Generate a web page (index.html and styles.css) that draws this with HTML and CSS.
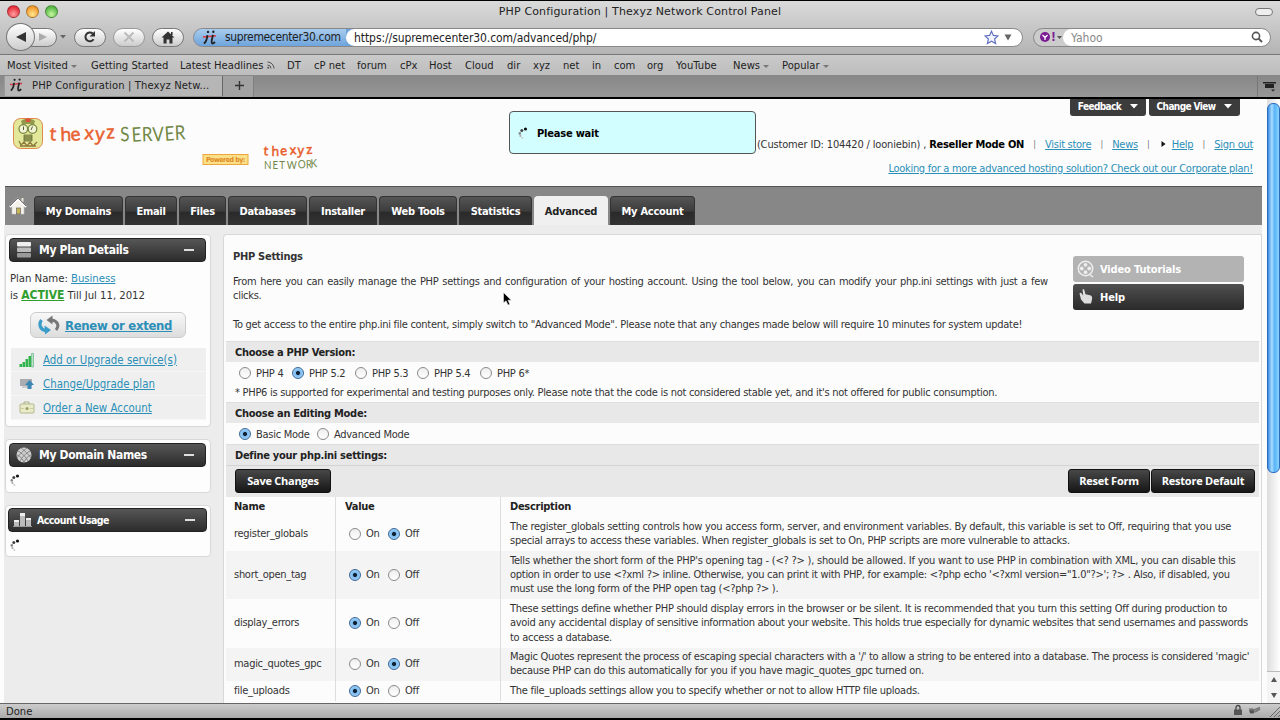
FILE: index.html
```html
<!DOCTYPE html>
<html lang="en">
<head>
    <meta charset="UTF-8">
    <meta name="viewport" content="width=device-width, initial-scale=1.0">
    <title>PHP Configuration | Thexyz Network Control Panel</title>
    <link rel="stylesheet" href="styles.css">
</head>
<body>
<svg width="0" height="0" class="defs">
    <symbol id="spinner" viewBox="0 0 12 14">
        <circle cx="8.5" cy="3" r="1.6" fill="#111"/>
        <circle cx="4.8" cy="4.4" r="1.5" fill="#444"/>
        <circle cx="2.8" cy="7.4" r="1.3" fill="#888"/>
        <circle cx="3.4" cy="10" r="1.1" fill="#aaa"/>
        <circle cx="5.4" cy="12" r="1" fill="#ccc"/>
    </symbol>
    <symbol id="ittt" viewBox="0 0 14 14">
        <path d="M1 6.2C4 7.4 8 5 13 5.6" fill="none" stroke="#d8404a" stroke-width="1.6"/>
        <path d="M5 4.8C4.8 8 4 11 1.8 12.6M10.2 4.6C9.6 8 8.2 11.4 9.4 12.4C10.2 13 11.4 12 12 11" fill="none" stroke="#222" stroke-width="1.7"/>
        <circle cx="5.6" cy="1.8" r="1.1" fill="#222"/>
        <circle cx="10.6" cy="1.6" r="1.1" fill="#222"/>
    </symbol>
</svg>

<div class="window">
    <div class="titlebar">
        <div class="lights"><i class="red"></i><i class="yellow"></i><i class="green"></i></div>
        <div class="title">PHP Configuration | Thexyz Network Control Panel</div>
        <i class="pill"></i>
    </div>

    <div class="toolbar">
        <div class="history">
            <span class="fwd"><svg width="10" height="10" viewBox="0 0 10 10"><path d="M1 1L9 5L1 9Z" fill="#aaa"/></svg></span>
            <span class="back"><svg width="12" height="12" viewBox="0 0 12 12"><path d="M11 1V11L1 6Z" fill="#333"/></svg></span>
        </div>
        <svg class="caret" width="6" height="4" viewBox="0 0 6 4"><path d="M0 0H6L3 3.5Z" fill="#666"/></svg>
        <span class="btn reload"><svg width="14" height="14" viewBox="0 0 14 14"><path d="M10.6 9.2A4.4 4.4 0 1 1 9.8 3.6" fill="none" stroke="#333" stroke-width="2"/><path d="M12 1V6.6H6.6Z" fill="#333"/></svg></span>
        <span class="btn stop"><svg width="12" height="12" viewBox="0 0 12 12"><path d="M1.5 1.5L10.5 10.5M10.5 1.5L1.5 10.5" stroke="#bbb" stroke-width="2"/></svg></span>
        <span class="btn home"><svg width="14" height="13" viewBox="0 0 14 13"><path d="M7 0.5L13.5 6.5H11.5V12.5H8.4V8.5H5.6V12.5H2.5V6.5H0.5ZM10 1H11.6V4H10Z" fill="#333"/></svg></span>
        <div class="address">
            <div class="site"><svg width="15" height="15"><use href="#ittt"/></svg><span>supremecenter30.com</span></div>
            <div class="url">https://supremecenter30.com/advanced/php/</div>
            <svg class="star" width="15" height="15" viewBox="0 0 15 15"><path d="M7.5 1.2L9.4 5.4L14 5.9L10.6 9L11.6 13.6L7.5 11.3L3.4 13.6L4.4 9L1 5.9L5.6 5.4Z" fill="#f4f6ff" stroke="#6474c0" stroke-width="1.2"/></svg>
            <svg class="drop" width="8" height="7" viewBox="0 0 8 7"><path d="M0.5 0.5H7.5L4 6.5Z" fill="#666"/></svg>
        </div>
        <div class="search">
            <div class="engine"><svg width="10" height="10" viewBox="0 0 10 10"><circle cx="5" cy="5" r="5" fill="#7b1b94"/><path d="M2.5 3L5 5.5L7.5 3M5 5.5V8" stroke="#fff" stroke-width="1.3" fill="none"/></svg><b>!</b><svg width="5" height="3" viewBox="0 0 5 3"><path d="M0 0H5L2.5 3Z" fill="#555"/></svg></div>
            <div class="query">Yahoo</div>
            <svg class="lens" width="12" height="12" viewBox="0 0 12 12"><circle cx="5" cy="5" r="3.6" fill="none" stroke="#555" stroke-width="1.6"/><path d="M7.6 7.6L11 11" stroke="#555" stroke-width="2"/></svg>
        </div>
    </div>

    <div class="bookmarks">
        <span>Most Visited <svg width="6" height="4" viewBox="0 0 6 4"><path d="M0 0H6L3 3Z" fill="#777"/></svg></span>
        <span>Getting Started</span>
        <span>Latest Headlines <svg width="8" height="8" viewBox="0 0 8 8"><path d="M0.5 1A6.5 6.5 0 0 1 7 7.5M0.5 4A3.5 3.5 0 0 1 4 7.5" fill="none" stroke="#555"/><circle cx="1.2" cy="6.8" r="1" fill="#555"/></svg></span>
        <span>DT</span>
        <span>cP net</span>
        <span>forum</span>
        <span>cPx</span>
        <span>Host</span>
        <span>Cloud</span>
        <span>dir</span>
        <span>xyz</span>
        <span>net</span>
        <span>in</span>
        <span>com</span>
        <span>org</span>
        <span>YouTube</span>
        <span>News <svg width="6" height="4" viewBox="0 0 6 4"><path d="M0 0H6L3 3Z" fill="#777"/></svg></span>
        <span>Popular <svg width="6" height="4" viewBox="0 0 6 4"><path d="M0 0H6L3 3Z" fill="#777"/></svg></span>
    </div>

    <div class="tabstrip">
        <div class="tab"><svg width="14" height="14"><use href="#ittt"/></svg><span>PHP Configuration | Thexyz Netw...</span></div>
        <div class="newtab"><svg width="9" height="9" viewBox="0 0 9 9"><path d="M4.5 0V9M0 4.5H9" stroke="#333" stroke-width="1.4"/></svg></div>
        <div class="alltabs"><svg width="13" height="11" viewBox="0 0 13 11"><path d="M0 1H13V2.5H0ZM2 3H11V7H2Z" fill="#222"/><path d="M8 8.5H12L10 10.5Z" fill="#222"/></svg></div>
    </div>

    <div class="viewport">
        <div class="page">
            <div class="header">
                <div class="logos">
                    <svg width="340" height="80" viewBox="0 0 340 80">
                        <rect x="13.5" y="19.5" width="29" height="30" rx="7" fill="#e3e79a" stroke="#e08a4c"/>
                        <path d="M21 22C25 19 31 19 35 22L34 25H22Z" fill="#8f9a4c"/>
                        <path d="M25 20.5L28 19L31 20.5L30 23H26Z" fill="#d9543a"/>
                        <circle cx="23.3" cy="30" r="4.3" fill="#f2f3d4" stroke="#77873f" stroke-width="1.2"/>
                        <circle cx="32.5" cy="30" r="4.3" fill="#f2f3d4" stroke="#77873f" stroke-width="1.2"/>
                        <path d="M23.5 27.5V31M32.5 27.5L31 31" stroke="#55602e"/>
                        <path d="M24 36H32V42H24ZM24 38H32M24 40H32" fill="#a8ad62" stroke="#5f6b34" stroke-width="0.8"/>
                        <path d="M19 42L21 46L24 43L27 47L30 43L33 47L37 43M20 47H36" fill="none" stroke="#8d7a3c" stroke-width="1.3"/>
                        <text class="hand orange big" x="49.5 60.5 71 84 95 106.5" y="41 42 42 40 41 39.5" rotate="3 -2 -6 4 4 -3">thexyz</text>
                        <text class="hand green big" transform="scale(0.85 1)" x="141.8 155.3 167 179.4 194 205.9" y="42.5 43 42.5 42.5 42 41" rotate="-3 -4 -2 -2 -4 -3">SERVER</text>
                        <text class="hand orange small" x="263.5 271.5 280.5 290 297.5 306.5" y="56 56.500 56.500 55.500 55.500 55" rotate="3 0 -6 -4 2 -3">thexyz</text>
                        <text class="hand green small2" transform="scale(0.85 1)" x="310.6 320.500 328.500 337.500 350.500 360 365.500" y="70 70 70 70 69.5 69.5 68.500" rotate="0 0 0 0 -3 -2 -3">NETWORK</text>
                        <rect x="203" y="55.5" width="45" height="10" fill="#fbe08a" stroke="#eda63c"/>
                        <text x="206" y="63" class="powered" textLength="39">Powered by:</text>
                    </svg>
                </div>
                <div class="account">
                    <div class="viewtabs">
                        <span class="vt">Feedback<svg width="8" height="5" viewBox="0 0 8 5"><path d="M0 0H8L4 4.5Z" fill="#fff"/></svg></span>
                        <span class="vt wide">Change View<svg width="8" height="5" viewBox="0 0 8 5"><path d="M0 0H8L4 4.5Z" fill="#fff"/></svg></span>
                    </div>
                    <div class="userline">
                        <span class="customer">(Customer ID: 104420 / looniebin) , <b>Reseller Mode ON</b></span>
                        <i>|</i><a>Visit store</a><i>|</i><a>News</a><i>|</i><svg width="5" height="8" viewBox="0 0 5 8"><path d="M0.5 1L4.5 4L0.5 7Z" fill="#111"/></svg><a>Help</a><i>|</i><a>Sign out</a>
                    </div>
                    <div class="upsell"><a>Looking for a more advanced hosting solution? Check out our Corporate plan!</a></div>
                </div>
            </div>

            <div class="nav">
                <span class="navhome"><svg width="18" height="20" viewBox="0 0 18 20"><path d="M12.5 2H14.5V6L12.5 5Z" fill="#e9e4d8"/><path d="M3 9L9 3L15 9V18H3Z" fill="#f3f1ea" stroke="#ccc" stroke-width="0.6"/><path d="M1 11L9 3L17 11" fill="none" stroke="#fff" stroke-width="2"/><path d="M1 10L9 2L17 10" fill="none" stroke="#555" stroke-width="0.8"/><rect x="7.5" y="12" width="4" height="6" fill="#c8b45a" stroke="#555" stroke-width="0.6"/></svg></span>
                <span class="navtab">My Domains</span>
                <span class="navtab">Email</span>
                <span class="navtab">Files</span>
                <span class="navtab">Databases</span>
                <span class="navtab">Installer</span>
                <span class="navtab">Web Tools</span>
                <span class="navtab">Statistics</span>
                <span class="navtab active">Advanced</span>
                <span class="navtab">My Account</span>
            </div>

            <div class="columns">
                <div class="sidebar">
                    <div class="box plan">
                        <div class="boxhead"><svg width="16" height="16" viewBox="0 0 16 16"><rect x="1" y="0" width="14" height="4.5" rx="1" fill="#eee"/><rect x="1" y="5.5" width="14" height="4.5" rx="1" fill="#bbb"/><rect x="1" y="11" width="14" height="4.5" rx="1" fill="#999"/></svg><span>My Plan Details</span><i></i></div>
                        <div class="planinfo">
                            <div>Plan Name: <a>Business</a></div>
                            <div>is <b>ACTIVE</b> Till Jul 11, 2012</div>
                        </div>
                        <div class="renew"><svg width="22" height="20" viewBox="0 0 22 20"><path d="M3.5 5C0.5 9 2 14.5 7.5 15.5" fill="none" stroke="#3a9cc8" stroke-width="3.2"/><path d="M6.5 10.5L13 15L7 19.5Z" fill="#3a9cc8"/><path d="M18 15C21.5 11 20 6 13.5 5" fill="none" stroke="#777" stroke-width="3"/><path d="M14.5 0.5V9.5L8.5 5Z" fill="#777"/></svg><a>Renew or extend</a></div>
                        <div class="links">
                            <div><svg width="16" height="16" viewBox="0 0 16 16"><path d="M0.5 12H3V15H0.5ZM3.5 10H6V15H3.5ZM6.5 7H9V15H6.5ZM9.5 4H12V15H9.5Z" fill="#2fb34a"/><path d="M12.5 1.5H14.5V15H12.5Z" fill="#b9e6bd" stroke="#5a8" stroke-width="0.6"/></svg><a>Add or Upgrade service(s)</a></div>
                            <div><svg width="16" height="16" viewBox="0 0 16 16"><rect x="1" y="3" width="12" height="7" fill="#a9adb2"/><rect x="3" y="10" width="6" height="2" fill="#ccc"/><path d="M10.5 4L15 9H12.5V13H8.5V9H6Z" fill="#3a86b4"/></svg><a>Change/Upgrade plan</a></div>
                            <div><svg width="16" height="16" viewBox="0 0 16 16"><path d="M5 4V2H10V4" fill="none" stroke="#a9b07c"/><rect x="1" y="4" width="14" height="9" rx="1" fill="#e9ebc8" stroke="#b4b98c"/><circle cx="8" cy="8.5" r="1.6" fill="#9aa063"/><path d="M1 8.5H5M11 8.5H15" stroke="#c9cda0"/></svg><a>Order a New Account</a></div>
                        </div>
                    </div>
                    <div class="box domains">
                        <div class="boxhead"><svg width="16" height="16" viewBox="0 0 16 16"><circle cx="8" cy="8" r="7.5" fill="#d0d0d0"/><path d="M2 4C6 6 10 10 12 14M5 1C9 4 13 8 15 11M1 8C4 9 7 12 8 15.5M14 4C10 6 6 10 4 14M11 1C7 4 3 8 1 11M15 8C12 9 9 12 8 15.5" fill="none" stroke="#777" stroke-width="0.8"/></svg><span>My Domain Names</span><i></i></div>
                        <svg class="spin" width="12" height="14"><use href="#spinner"/></svg>
                    </div>
                    <div class="box usage">
                        <div class="boxhead"><svg width="20" height="16" viewBox="0 0 20 16"><path d="M1 8H6V14H1ZM7 1H12V14H7ZM13 6H18V14H13Z" fill="#bbb"/><path d="M1 8H6V10H1ZM7 1H12V4H7ZM13 6H18V8H13Z" fill="#eee"/><path d="M0 14.5H19" stroke="#999"/></svg><span>Account Usage</span><i></i></div>
                        <svg class="spin" width="12" height="14"><use href="#spinner"/></svg>
                    </div>
                </div>

                <div class="main">
                    <div class="intro">
                        <div class="introtext">
                            <h1>PHP Settings</h1>
                            <p><span class="ln justified">From here you can easily manage the PHP settings and configuration of your hosting account. Using the tool below, you can modify your php.ini settings with just a few</span><span class="ln">clicks.</span></p>
                            <p><span class="ln">To get access to the entire php.ini file content, simply switch to "Advanced Mode". Please note that any changes made below will require 10 minutes for system update!</span></p>
                        </div>
                        <div class="helpers">
                            <div class="helper video"><svg width="18" height="18" viewBox="0 0 18 18"><circle cx="8.5" cy="8.5" r="7.2" fill="none" stroke="#eee" stroke-width="1.5"/><circle cx="8.5" cy="4.8" r="1.9" fill="#eee"/><circle cx="8.5" cy="12.2" r="1.9" fill="#eee"/><circle cx="4.8" cy="8.5" r="1.9" fill="#eee"/><circle cx="12.2" cy="8.5" r="1.9" fill="#eee"/><path d="M12 14L16 17" stroke="#eee" stroke-width="1.5"/></svg><span>Video Tutorials</span></div>
                            <div class="helper"><svg width="18" height="18" viewBox="0 0 18 18"><path d="M5.5 1.5C6.5 1 7.3 1.5 7.5 2.5L8.5 6.2L13 7.2C15 7.8 15.5 9.2 15 11.5L14 15.5H7.5L4 11.5L2.5 5.5C3 4.5 4 4.5 4.5 5.2L6.2 7.5Z" fill="#ddd"/></svg><span>Help</span></div>
                        </div>
                    </div>

                    <div class="band">Choose a PHP Version:</div>
                    <div class="radios versions">
                        <label><input type="radio" name="ver"><span>PHP 4</span></label>
                        <label><input type="radio" name="ver" checked><span>PHP 5.2</span></label>
                        <label><input type="radio" name="ver"><span>PHP 5.3</span></label>
                        <label><input type="radio" name="ver"><span>PHP 5.4</span></label>
                        <label><input type="radio" name="ver"><span>PHP 6*</span></label>
                    </div>
                    <div class="note">* PHP6 is supported for experimental and testing purposes only. Please note that the code is not considered stable yet, and it's not offered for public consumption.</div>
                    <div class="band">Choose an Editing Mode:</div>
                    <div class="radios modes">
                        <label><input type="radio" name="mode" checked><span>Basic Mode</span></label>
                        <label><input type="radio" name="mode"><span>Advanced Mode</span></label>
                    </div>
                    <div class="band">Define your php.ini settings:</div>
                    <div class="actions">
                        <button class="save">Save Changes</button>
                        <button class="reset">Reset Form</button>
                        <button class="restore">Restore Default</button>
                    </div>

                    <div class="settings">
                        <div class="row head"><b>Name</b><b>Value</b><b>Description</b></div>
                        <div class="row">
                            <span>register_globals</span>
                            <span class="onoff"><label><input type="radio" name="rg">On</label><label><input type="radio" name="rg" checked>Off</label></span>
                            <span class="desc"><span class="ln">The register_globals setting controls how you access form, server, and environment variables. By default, this variable is set to Off, requiring that you use</span><span class="ln">special arrays to access these variables. When register_globals is set to On, PHP scripts are more vulnerable to attacks.</span></span>
                        </div>
                        <div class="row alt">
                            <span>short_open_tag</span>
                            <span class="onoff"><label><input type="radio" name="so" checked>On</label><label><input type="radio" name="so">Off</label></span>
                            <span class="desc"><span class="ln loose">Tells whether the short form of the PHP's opening tag - (&lt;? ?&gt; ), should be allowed. If you want to use PHP in combination with XML, you can disable this</span><span class="ln">option in order to use &lt;?xml ?&gt; inline. Otherwise, you can print it with PHP, for example: &lt;?php echo '&lt;?xml version="1.0"?&gt;'; ?&gt; . Also, if disabled, you</span><span class="ln">must use the long form of the PHP open tag (&lt;?php ?&gt; ).</span></span>
                        </div>
                        <div class="row">
                            <span>display_errors</span>
                            <span class="onoff"><label><input type="radio" name="de" checked>On</label><label><input type="radio" name="de">Off</label></span>
                            <span class="desc"><span class="ln">These settings define whether PHP should display errors in the browser or be silent. It is recommended that you turn this setting Off during production to</span><span class="ln tight">avoid any accidental display of sensitive information about your website. This holds true especially for dynamic websites that send usernames and passwords</span><span class="ln">to access a database.</span></span>
                        </div>
                        <div class="row alt">
                            <span>magic_quotes_gpc</span>
                            <span class="onoff"><label><input type="radio" name="mq">On</label><label><input type="radio" name="mq" checked>Off</label></span>
                            <span class="desc"><span class="ln">Magic Quotes represent the process of escaping special characters with a '/' to allow a string to be entered into a database. The process is considered 'magic'</span><span class="ln">because PHP can do this automatically for you if you have magic_quotes_gpc turned on.</span></span>
                        </div>
                        <div class="row">
                            <span>file_uploads</span>
                            <span class="onoff"><label><input type="radio" name="fu" checked>On</label><label><input type="radio" name="fu">Off</label></span>
                            <span class="desc"><span class="ln">The file_uploads settings allow you to specify whether or not to allow HTTP file uploads.</span></span>
                        </div>
                    </div>
                </div>
            </div>
        </div>

        <div class="scrollbar">
            <div class="thumb"></div>
            <div class="arrows"><svg width="6" height="5" viewBox="0 0 6 5"><path d="M3 0L6 5H0Z" fill="#555"/></svg><svg width="6" height="5" viewBox="0 0 6 5"><path d="M3 5L6 0H0Z" fill="#555"/></svg></div>
        </div>

        <div class="wait"><svg width="12" height="14"><use href="#spinner"/></svg><b>Please wait</b></div>
        <svg class="cursor" width="9" height="14" viewBox="0 0 9 14"><path d="M0.5 0.5V11L3 8.7L5 13L6.8 12.2L5 8.2H8.3Z" fill="#000" stroke="#fff" stroke-width="0.5"/></svg>
    </div>

    <div class="status">
        <span>Done</span>
        <svg width="46" height="14" viewBox="0 0 46 14"><path d="M2 6V3.5A2 2 0 0 1 6 3.5V6" fill="none" stroke="#444" stroke-width="1.3"/><rect x="0" y="5.5" width="8" height="5.5" fill="#555"/><circle cx="18" cy="7" r="2.6" fill="#555"/><path d="M15 5L20 6M20 6L26 3.5M21 8L26 5" stroke="#777" stroke-width="1.5"/><path d="M36 13L46 3M40 13L46 7M44 13L46 11" stroke="#666"/></svg>
    </div>
</div>
</body>
</html>
```

FILE: styles.css
```css
* {
    box-sizing: border-box;
}

body {
    margin: 0;
    background: #000;
    font-family: "DejaVu Sans Condensed", "DejaVu Sans", sans-serif;
    font-stretch: condensed;
    font-size: 11px;
    letter-spacing: -0.28px;
    color: #333;
}

svg {
    flex: none;
}

a {
    color: #2b8fb8;
    text-decoration: underline;
}

.defs {
    position: absolute;
}

.window {
    width: 1280px;
    height: 720px;
    padding: 1px 0 2px;
    display: flex;
    flex-direction: column;
    overflow: hidden;
}

/* browser chrome */
.titlebar, .toolbar, .bookmarks, .tabstrip, .status {
    flex: none;
    display: flex;
    align-items: center;
    font-family: "DejaVu Sans", sans-serif;
    font-stretch: normal;
    font-size: 10px;
    letter-spacing: 0;
    color: #222;
}

.titlebar {
    height: 21px;
    padding: 0 7px;
    background: linear-gradient(#dadada, #cbcbcb);
}

.lights {
    display: flex;
    gap: 6px;
    width: 100px;
}

.lights i {
    width: 13px;
    height: 13px;
    border-radius: 50%;
    border: 1px solid rgba(0, 0, 0, 0.3);
}

.red { background: radial-gradient(circle at 50% 75%, #ffa0a0, #e8303c 70%); }
.yellow { background: radial-gradient(circle at 50% 75%, #ffe890, #f29a30 70%); }
.green { background: radial-gradient(circle at 50% 75%, #c8f8a0, #58b848 70%); }

.title {
    flex: 1;
    text-align: center;
    font-size: 11px;
    letter-spacing: 0.15px;
}

.pill {
    width: 18px;
    height: 8px;
    margin: 0 0 0 82px;
    border: 1px solid #777;
    border-radius: 5px;
    background: #eee;
}

.toolbar {
    height: 33px;
    padding: 0 9px 2px 6px;
    background: linear-gradient(#cbcbcb, #b4b4b4);
    border-bottom: 1px solid #777;
}

.history {
    display: flex;
    flex-direction: row-reverse;
    align-items: center;
}

.back, .fwd, .btn {
    display: flex;
    align-items: center;
    justify-content: center;
    border: 1px solid #777;
    background: linear-gradient(#fff, #ccc);
}

.back {
    width: 29px;
    height: 28px;
    border-radius: 50%;
    z-index: 1;
}

.fwd {
    width: 28px;
    height: 19px;
    margin-left: -6px;
    border-radius: 0 10px 10px 0;
}

.caret {
    margin: 0 8px 0 3px;
}

.btn {
    width: 32px;
    height: 19px;
    margin-right: 7px;
    border-radius: 10px;
}

.stop {
    border-color: #999;
}

.address, .search {
    display: flex;
    align-items: center;
    height: 19px;
    border: 1px solid #888;
    border-radius: 10px;
    overflow: hidden;
    font-family: "DejaVu Sans Condensed", "DejaVu Sans", sans-serif;
    font-stretch: condensed;
    font-size: 12px;
}

.address {
    width: 830px;
    margin-left: 2px;
    padding-right: 8px;
    background: linear-gradient(90deg, #6ea4dc 180px, #fff 180px);
}

.site {
    width: 152px;
    height: 17px;
    padding-left: 8px;
    display: flex;
    align-items: center;
    gap: 8px;
    white-space: nowrap;
    letter-spacing: -0.35px;
    background: linear-gradient(#a8ccee, #6ea4dc);
}

.url {
    flex: 1;
    height: 17px;
    line-height: 18px;
    padding-left: 8px;
    border-radius: 9px 0 0 9px;
    background: #fff;
    letter-spacing: -0.07px;
}

.star {
    margin-right: 1px;
}

.drop {
    margin: 0 2px 0 4px;
}

.search {
    width: 238px;
    margin-left: 10px;
    padding-right: 7px;
    background: linear-gradient(90deg, #ccc 60px, #fff 60px);
}

.engine {
    width: 29px;
    padding-left: 6px;
    display: flex;
    align-items: center;
    gap: 1px;
    color: #7b1b94;
}

.query {
    flex: 1;
    height: 17px;
    line-height: 18px;
    padding-left: 8px;
    border-radius: 9px 0 0 9px;
    background: #fff;
    color: #888;
}

.bookmarks {
    height: 20px;
    padding-left: 7px;
    display: grid;
    grid-template-columns: 84px 89px 107px 27px 43px 43px 29px 36px 42px 26px 30px 29px 22px 33px 29px 57px 49px 60px;
    white-space: nowrap;
    background: linear-gradient(#cacaca, #bdbdbd);
}

.tabstrip {
    height: 22px;
    background: linear-gradient(#888, #979797);
    border-top: 1px solid #888;
}

.tab {
    width: 219px;
    height: 20px;
    margin-left: 4px;
    padding: 0 0 2px 4px;
    display: flex;
    align-items: center;
    gap: 9px;
    white-space: nowrap;
    letter-spacing: 0.12px;
    background: #b6b6b6;
    border-right: 1px solid #666;
    border-left: 1px solid #999;
    align-self: flex-start;
}

.newtab {
    width: 31px;
    height: 21px;
    padding: 0 0 3px 2px;
    display: flex;
    align-items: center;
    justify-content: center;
    background: #a2a2a2;
    border-right: 1px solid #808080;
}

.alltabs {
    width: 23px;
    height: 21px;
    margin-left: auto;
    display: flex;
    align-items: center;
    justify-content: center;
    border-left: 1px solid #777;
}

.status {
    height: 15px;
    padding: 0 0 0 6px;
    justify-content: space-between;
    background: linear-gradient(#ccc, #aaa);
    border-top: 1px solid #666;
}

/* page */
.viewport {
    position: relative;
    flex: 1;
    min-height: 0;
    margin-top: 2px;
    display: flex;
    background: #fcfcfc;
    overflow: hidden;
}

.page {
    width: 1267px;
    padding-right: 5px;
    padding-left: 4px;
}

.header {
    height: 87px;
    display: flex;
    justify-content: space-between;
}

.logos {
    margin-left: -4px;
}

.hand {
    font-family: "Open Sans", sans-serif;
    font-stretch: normal;
    letter-spacing: 0;
}

.orange {
    fill: #e8622f;
    stroke: #e8622f;
    stroke-width: 0.6px;
}

.green {
    fill: #728848;
    font-family: Lato, sans-serif;
}

.orange.big { font-size: 18px; }
.green.big { font-size: 20px; }
.small { font-size: 12.5px; }
.small2 { font-size: 11.5px; }

.powered {
    font: bold 7px "DejaVu Sans Condensed", sans-serif;
    fill: #e0881f;
}

.account {
    padding-right: 9px;
}

.viewtabs {
    display: flex;
    justify-content: flex-end;
    gap: 3px;
    padding-right: 13px;
}

.vt {
    width: 76px;
    height: 17px;
    padding-bottom: 2px;
    display: flex;
    align-items: center;
    justify-content: center;
    gap: 9px;
    border-radius: 0 0 3px 3px;
    background: #3c3c3c;
    color: #fff;
    font-weight: bold;
    font-size: 10px;
    letter-spacing: -0.6px;
}

.wide {
    width: 91px;
}

.userline {
    display: flex;
    align-items: center;
    justify-content: flex-end;
    height: 18px;
    margin-top: 19px;
    white-space: nowrap;
}

.userline i {
    width: 21px;
    text-align: center;
    font-style: normal;
    font-size: 9px;
    color: #777;
}

.userline svg {
    margin: 0 6px 0 2px;
}

.customer {
    letter-spacing: -0.16px;
}

.userline b {
    color: #000;
    letter-spacing: -0.28px;
}

.upsell {
    margin-top: 9px;
    text-align: right;
    white-space: nowrap;
}

.nav {
    height: 39px;
    margin-left: 1px;
    padding-top: 9px;
    display: grid;
    grid-template-columns: 27px 89px 52px 47px 79px 68px 78px 73px 74px 85px;
    column-gap: 2px;
    background: #878787;
    border-top: 1px solid #555;
}

.navhome {
    padding-left: 4px;
}

.navtab {
    display: flex;
    align-items: center;
    justify-content: center;
    border-radius: 4px 4px 0 0;
    border: 1px solid #333;
    border-bottom: 0;
    background: linear-gradient(#555, #3c3c3c 50%, #2a2a2a 55%, #333);
    color: #fff;
    font-weight: bold;
    white-space: nowrap;
}

.navtab.active {
    background: #f0f0f0;
    border-color: #f0f0f0;
    color: #222;
}

.columns {
    display: flex;
    height: 500px;
    padding: 9px 0 0 1px;
    background: #ececec;
}

.sidebar {
    width: 206px;
    margin-right: 12px;
}

.box {
    padding: 3px 4px;
    background: #fdfdfd;
    border: 1px solid #d8d8d8;
    border-radius: 4px;
}

.plan { height: 193px; }
.domains { height: 54px; margin-top: 12px; }
.usage { height: 52px; margin-top: 12px; }

.boxhead {
    height: 24px;
    margin: 0 0 0 -1px;
    padding: 0 11px 0 6px;
    display: flex;
    align-items: center;
    gap: 7px;
    border-radius: 4px;
    border: 1px solid #222;
    background: linear-gradient(#565656, #2c2c2c);
    color: #fff;
    font-weight: bold;
    font-size: 12px;
    letter-spacing: -0.33px;
}

.usage .boxhead {
    margin-top: -1px;
    margin-right: -1px;
    margin-left: -2px;
    font-size: 10.5px;
    letter-spacing: -0.55px;
    padding-left: 4px;
    gap: 4px;
}

.boxhead i {
    width: 10px;
    height: 2px;
    margin-left: auto;
    background: #ddd;
}

.spin {
    display: block;
    margin: 6px 0 0 -1px;
}

.planinfo {
    margin: 8px 0 0;
    padding-top: 1px;
    font-size: 11.3px;
    line-height: 16px;
    letter-spacing: -0.05px;
}

.planinfo b {
    color: #2f9e2f;
    font-size: 12px;
    text-decoration: underline;
}

.renew {
    width: 156px;
    height: 26px;
    margin: 8px 0 10px 20px;
    padding-left: 7px;
    display: flex;
    align-items: center;
    gap: 5px;
    border: 1px solid #ccc;
    border-radius: 6px;
    background: linear-gradient(#f8f8f8, #ddd);
    font-weight: bold;
    font-size: 13px;
    letter-spacing: -0.3px;
}

.links {
    margin-left: 1px;
    background: #efefef;
    font-size: 11.4px;
    letter-spacing: 0;
}

.links div {
    height: 24px;
    padding-left: 8px;
    display: flex;
    align-items: center;
    gap: 8px;
    border-bottom: 1px solid #f6f6f6;
}

.main {
    width: 1039px;
    padding: 0 2px;
    background: #fcfcfc;
    border: 1px solid #d8d8d8;
    border-bottom: 0;
    border-radius: 4px 0 0 0;
}

.intro {
    height: 106px;
    padding: 15px 15px 0 7px;
    display: flex;
    justify-content: space-between;
}

h1 {
    margin: 0 0 11px;
    font-size: 11px;
    line-height: 14px;
}

p {
    margin: 0 0 14px;
    line-height: 14.3px;
}

.ln {
    display: block;
    width: max-content;
    white-space: nowrap;
}

.justified {
    word-spacing: 1px;
}

.loose {
    letter-spacing: -0.215px;
}

.tight {
    letter-spacing: -0.305px;
}

.helpers {
    width: 171px;
    padding-top: 6px;
}

.helper {
    height: 26px;
    margin-bottom: 2px;
    padding-left: 4px;
    display: flex;
    align-items: center;
    gap: 5px;
    border-radius: 3px;
    background: linear-gradient(#505050, #2a2a2a);
    color: #fff;
    font-weight: bold;
    letter-spacing: -0.15px;
}

.video {
    background: #b3b3b3;
}

.band {
    height: 21px;
    padding-left: 9px;
    line-height: 21px;
    background: #e8e8e8;
    border-top: 1px solid #dedede;
    font-weight: bold;
    color: #222;
}

.radios {
    height: 21px;
    padding-left: 13px;
    display: grid;
    align-items: center;
}

.versions {
    grid-template-columns: 53px 63px 62px 63px 60px;
}

.modes {
    grid-template-columns: 78px 120px;
}

.radios label, .onoff label {
    display: flex;
    align-items: center;
    white-space: nowrap;
}

input {
    appearance: none;
    width: 12px;
    height: 12px;
    margin: 0;
    border: 1px solid #8a8a8a;
    border-radius: 50%;
    background: linear-gradient(#eee, #fff);
}

input:checked {
    border-color: #3a6898;
    background: radial-gradient(circle, #123 0 1.6px, #7ab8ec 2.4px, #b8e0ff);
}

.radios span {
    margin: 1px 0 0 5px;
}

.note {
    height: 19px;
    padding-left: 9px;
    line-height: 20px;
    white-space: nowrap;
}

.actions {
    height: 32px;
    padding: 3px 4px 0 9px;
    display: flex;
    gap: 1px;
    background: #e8e8e8;
    border-top: 1px solid #d4d4d4;
}

button {
    height: 24px;
    padding: 0 0 1px;
    border: 1px solid #111;
    border-radius: 3px;
    background: linear-gradient(#484848, #161616);
    color: #fff;
    font: bold 11px "Open Sans", sans-serif;
    letter-spacing: -0.25px;
}

.save { width: 96px; }
.reset { width: 82px; margin-left: auto; }
.restore { width: 104px; }

.row {
    display: grid;
    grid-template-columns: 110px 165px 1fr;
    line-height: 14.3px;
}

.row > * {
    padding: 2.7px 0 2.7px 9px;
    display: flex;
    align-items: center;
}

.row > :first-child {
    padding-left: 8px;
}

.row > :nth-child(-n+2) {
    border-right: 1px solid #ddd;
}

.row > .desc {
    display: block;
}

.head {
    height: 20px;
    color: #222;
}

.alt {
    background: #f4f4f4;
}

.onoff label {
    width: 39px;
    gap: 5px;
}

.row > .onoff {
    padding-left: 13px;
}

.scrollbar {
    width: 13px;
    display: flex;
    flex-direction: column;
    justify-content: space-between;
    background: linear-gradient(90deg, #ddd, #fff);
}

.thumb {
    height: 370px;
    margin-top: 4px;
    border-radius: 6px;
    border: 1px solid #2b6cc0;
    background: linear-gradient(90deg, #3a8be0, #a8dcff 35%, #58b4f8 60%, #8ad4ff);
}

.arrows {
    height: 32px;
    display: flex;
    flex-direction: column;
    align-items: center;
    justify-content: space-around;
    background: #f4f4f4;
    border-top: 1px solid #bbb;
}

/* floats over the header */
.wait {
    position: absolute;
    left: 509px;
    top: 12px;
    width: 247px;
    height: 43px;
    padding-left: 7px;
    display: flex;
    align-items: center;
    gap: 8px;
    border: 1px solid #555;
    border-radius: 4px;
    background: #d2feff;
    color: #000;
}

.wait b {
    padding-top: 1px;
    letter-spacing: -0.2px;
}

.cursor {
    position: absolute;
    left: 503px;
    top: 193px;
}
```
